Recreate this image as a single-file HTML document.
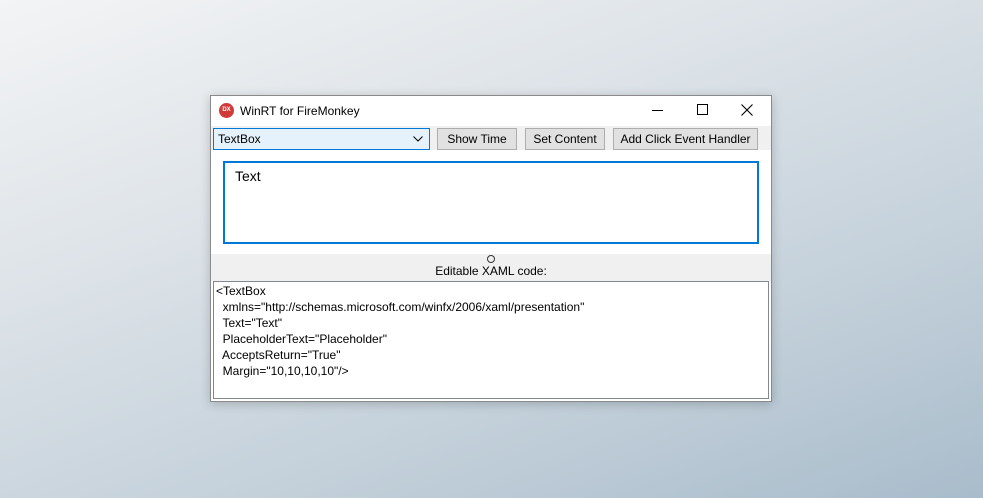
<!DOCTYPE html>
<html><head><style>
*{margin:0;padding:0;box-sizing:border-box}
body{width:983px;height:498px;overflow:hidden;position:relative;font-family:"Liberation Sans",sans-serif;font-size:12px;color:#000;
background:linear-gradient(160deg,#f3f4f5 0%,#dde3e8 35%,#c3d0da 70%,#a9bccb 100%)}
.a{position:absolute}
.btn{position:absolute;top:128px;height:22px;background:#e1e1e1;border:1px solid #adadad;text-align:center;line-height:21px}
</style></head><body>
<div class="a" style="left:210px;top:95px;width:562px;height:307px;background:#fff;border:1px solid #8a8a8a;box-shadow:0 2px 10px rgba(0,0,0,.2)"></div>
<div class="a" style="left:219px;top:103px;width:15px;height:15px;border-radius:50%;background:#d23a3a;color:#fff;font-size:6px;line-height:15px;text-align:center;font-weight:bold">DX</div>
<div class="a" style="left:240px;top:104px;font-size:12px">WinRT for FireMonkey</div>
<div class="a" style="left:652px;top:110px;width:11px;height:1px;background:#000"></div>
<div class="a" style="left:697px;top:104px;width:11px;height:11px;border:1px solid #000"></div>
<svg class="a" style="left:741px;top:104px" width="12" height="12"><path d="M0.5 0.5L11.5 11.5M11.5 0.5L0.5 11.5" stroke="#000" stroke-width="1.1"/></svg>
<div class="a" style="left:211px;top:126px;width:560px;height:24px;background:#f0f0f0"></div>
<div class="a" style="left:213px;top:128px;width:217px;height:22px;background:#e5f1fb;border:1px solid #0078d7;padding-left:4px;line-height:21px">TextBox</div>
<svg class="a" style="left:413px;top:136px" width="10" height="6"><path d="M0.5 0.5L5 5L9.5 0.5" stroke="#000" fill="none"/></svg>
<div class="btn" style="left:437px;width:80px">Show Time</div>
<div class="btn" style="left:525px;width:80px">Set Content</div>
<div class="btn" style="left:613px;width:145px">Add Click Event Handler</div>
<div class="a" style="left:223px;top:161px;width:536px;height:83px;border:2px solid #0078d7;background:#fff;padding:5px 0 0 10px;font-size:14px">Text</div>
<div class="a" style="left:211px;top:254px;width:560px;height:27px;background:#f0f0f0"></div>
<div class="a" style="left:487px;top:255px;width:8px;height:8px;border:1px solid #333;border-radius:50%"></div>
<div class="a" style="left:211px;top:264px;width:560px;text-align:center;font-size:12px">Editable XAML code:</div>
<div class="a" style="left:213px;top:281px;width:556px;height:118px;border:1px solid #828790;background:#fff;padding:1px 0 0 2px;font-size:12px;line-height:16px;white-space:pre">&lt;TextBox
  xmlns="http://schemas.microsoft.com/winfx/2006/xaml/presentation"
  Text="Text"
  PlaceholderText="Placeholder"
  AcceptsReturn="True"
  Margin="10,10,10,10"/&gt;</div>
</body></html>
